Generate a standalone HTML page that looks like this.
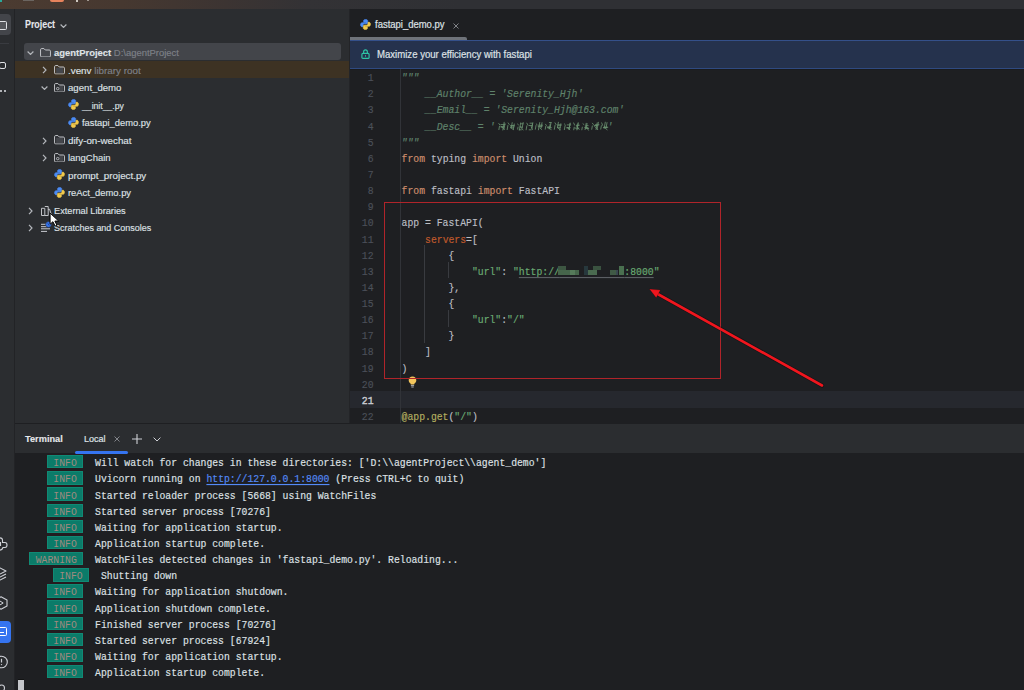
<!DOCTYPE html>
<html><head><meta charset="utf-8">
<style>
*{margin:0;padding:0;box-sizing:border-box}
html,body{width:1024px;height:690px;overflow:hidden;background:#1e1f22}
body{position:relative;font-family:"Liberation Sans",sans-serif;color:#dfe1e5}
.abs{position:absolute}
#title{left:0;top:0;width:1024px;height:9px;background:linear-gradient(90deg,#4b3b31 0%,#463830 12%,#3c3432 22%,#333235 30%,#2f3034 45%,#2f3034 100%)}
#lstrip{left:0;top:9px;width:15px;height:681px;background:#2b2d30;border-right:1px solid #222326}
#proj{left:15px;top:9px;width:335px;height:414px;background:#2b2d30}
#editor{left:350px;top:9px;width:674px;height:414px;background:#1e1f22}
#termhdr{left:15px;top:423px;width:1009px;height:30px;background:#2b2d30;border-top:1px solid #1e1f22}
#term{left:15px;top:453px;width:1009px;height:237px;background:#1e1f22}
.ui{font-family:"Liberation Sans",sans-serif;font-size:9.5px;white-space:pre;line-height:12px}
.mono{position:absolute;font-family:"Liberation Mono",monospace;font-size:9.77px;white-space:pre;line-height:16.14px;transform:scaleY(1.13);transform-origin:0 12.2px;-webkit-text-stroke:0.15px}
.row{position:absolute;height:17.5px;line-height:17.5px;font-size:9.6px;white-space:pre;-webkit-text-stroke:0.15px}
.gray{color:#7e8188}
</style></head><body>
<div id="title" class="abs"></div>
<div id="lstrip" class="abs"></div>
<div id="proj" class="abs"></div>
<div id="editor" class="abs"></div>
<div id="termhdr" class="abs"></div>
<div id="term" class="abs"></div>
<svg width="0" height="0" style="position:absolute">
<defs>
<symbol id="py" viewBox="0 0 16 16">
<path fill="#4c8cf5" stroke="#4c8cf5" stroke-width="0.9" stroke-linejoin="round" d="M7.9 0.8C5.2 0.8 5.3 2 5.3 2.6V4.6H8.1V5.3H3.3C1.8 5.3 0.8 6.3 0.8 8.3C0.8 10.3 1.7 11.2 3 11.2H4.4V9.3C4.4 8 5.4 7 6.6 7H9.6C10.6 7 11.2 6.3 11.2 5.3V2.7C11.2 1.6 10.2 0.8 7.9 0.8Z"/>
<path fill="#f2c94c" stroke="#f2c94c" stroke-width="0.9" stroke-linejoin="round" d="M8.1 15.2C10.8 15.2 10.7 14 10.7 13.4V11.4H7.9V10.7H12.7C14.2 10.7 15.2 9.7 15.2 7.7C15.2 5.7 14.3 4.8 13 4.8H11.6V6.7C11.6 8 10.6 9 9.4 9H6.4C5.4 9 4.8 9.7 4.8 10.7V13.3C4.8 14.4 5.8 15.2 8.1 15.2Z"/>
</symbol>
<symbol id="folder" viewBox="0 0 11 9.5">
<path fill="#44464b" d="M2.1 2.7H9V8H2.1Z"/>
<path fill="none" stroke="#c9cbd0" stroke-width="0.95" d="M0.55 1.7C0.55 1 1 0.55 1.7 0.55H3.9L5.3 2H9.3C10 2 10.45 2.45 10.45 3.1V7.9C10.45 8.55 10 9 9.3 9H1.7C1 9 0.55 8.55 0.55 7.9Z"/>
</symbol>
<symbol id="modfolder" viewBox="0 0 11 9.5">
<path fill="#44464b" d="M5.2 2.7H9V8H5.2Z"/>
<path fill="none" stroke="#c9cbd0" stroke-width="0.95" d="M0.55 1.7C0.55 1 1 0.55 1.7 0.55H3.9L5.3 2H9.3C10 2 10.45 2.45 10.45 3.1V7.9C10.45 8.55 10 9 9.3 9H1.7C1 9 0.55 8.55 0.55 7.9Z"/>
<circle cx="3.7" cy="5.6" r="1.25" fill="none" stroke="#c9cbd0" stroke-width="0.8"/>
</symbol>
<symbol id="chr" viewBox="0 0 5 8"><path fill="none" stroke="#b4b7bc" stroke-width="1.2" d="M1 0.8L4 4L1 7.2"/></symbol>
<symbol id="chd" viewBox="0 0 7 4"><path fill="none" stroke="#b4b7bc" stroke-width="1.2" d="M0.6 0.5L3.5 3.4L6.4 0.5"/></symbol>
</defs></svg>
<div class="abs" style="left:0;top:0;width:2px;height:2px;background:#2aa89a"></div>
<div class="abs" style="left:23px;top:0;width:11px;height:1.2px;background:#6b6560"></div>
<div class="abs" style="left:50px;top:0;width:14px;height:2.2px;background:#e8835c;border-radius:0 0 2px 2px"></div>
<div class="abs" style="left:76px;top:0;width:1.5px;height:1.5px;background:#cfc8c0"></div>
<div class="abs" style="left:87px;top:0;width:2px;height:1.2px;background:#a09890"></div>
<div class="abs" style="left:0;top:13.8px;width:11px;height:21.7px;background:#43454a;border-radius:0 4px 4px 0"></div>
<div class="abs" style="left:-2px;top:21px;width:8.5px;height:9.4px;border:1.1px solid #dfe1e5;border-radius:1.5px;background:#55575c"></div>
<div class="abs" style="left:0;top:43px;width:9px;height:1px;background:#393b40"></div>
<div class="abs" style="left:-1px;top:61.8px;width:7px;height:6.8px;border:1.3px solid #dfe1e5;border-radius:2px"></div>
<div class="abs" style="left:-0.5px;top:90.3px;width:2px;height:2px;background:#dfe1e5;border-radius:1px"></div>
<div class="abs" style="left:4px;top:90.3px;width:2px;height:2px;background:#dfe1e5;border-radius:1px"></div>
<svg class="abs" style="left:-2.5px;top:537px" width="10" height="14" viewBox="0 0 10 14"><path d="M-3 3C-3 1.5 -1.5 0.8 1 0.8C3.5 0.8 4.5 1.8 4.5 3V5.5H7C8.5 5.5 9 6.5 9 8C9 9.5 8.5 10.5 7 10.5H5C4.5 12.5 3 13.2 1 13.2C-1.5 13.2 -3 12.5 -3 11" fill="none" stroke="#ced0d6" stroke-width="1.1"/><path d="M-3 5.5H2.5V8.5H-3" fill="none" stroke="#ced0d6" stroke-width="1.1"/></svg>
<svg class="abs" style="left:-2px;top:566.5px" width="10" height="14" viewBox="0 0 10 14"><path d="M-4 4L2 1L8 4L2 7Z M-4 7L2 10L8 7 M-4 10L2 13L8 10" fill="none" stroke="#ced0d6" stroke-width="1.1" stroke-linejoin="round"/></svg>
<svg class="abs" style="left:-1.5px;top:596px" width="10" height="14" viewBox="0 0 10 14"><path d="M2 0.8L8 4V10L2 13.2L-4 10V4Z" fill="none" stroke="#ced0d6" stroke-width="1.1" stroke-linejoin="round"/><path d="M0 4.5L4.2 7L0 9.5Z" fill="none" stroke="#ced0d6" stroke-width="1"/></svg>
<div class="abs" style="left:0;top:621px;width:11px;height:22px;background:#3574f0;border-radius:0 4px 4px 0"></div>
<div class="abs" style="left:-2px;top:627px;width:8.5px;height:9px;border:1.1px solid #ffffff;border-radius:1.5px"></div>
<div class="abs" style="left:0;top:632px;width:4px;height:1px;background:#fff"></div>
<svg class="abs" style="left:0;top:654.5px" width="10" height="14" viewBox="0 0 10 14"><circle cx="1.5" cy="7" r="5.8" fill="none" stroke="#ced0d6" stroke-width="1.1"/><path d="M1.5 3.8V7.5" stroke="#ced0d6" stroke-width="1.2"/><circle cx="1.5" cy="9.6" r="0.7" fill="#ced0d6"/></svg>
<svg class="abs" style="left:0;top:683px" width="10" height="7" viewBox="0 0 10 7"><circle cx="1.5" cy="5" r="3" fill="none" stroke="#ced0d6" stroke-width="1.1"/></svg>
<div class="abs ui" style="left:24.8px;top:19.27px;font-size:10.2px;font-weight:bold;color:#e6e8ec;transform:scaleX(0.87);transform-origin:0 0;-webkit-text-stroke:0.1px">Project</div>
<svg class="abs" style="left:60px;top:23.5px" width="7" height="4"><use href="#chd"/></svg>
<div class="abs" style="left:24px;top:43.3px;width:317px;height:17px;background:#43454a;border-radius:3px"></div>
<div class="abs" style="left:15px;top:60.5px;width:334px;height:17.4px;background:#3d3223"></div>
<svg class="abs" style="left:27px;top:50.90px" width="7" height="4"><use href="#chd"/></svg>
<svg class="abs" style="left:40px;top:47.70px" width="11" height="9.5"><use href="#folder"/></svg>
<div class="row" style="left:53.7px;top:44.15px;font-weight:bold;transform:scaleX(0.984);transform-origin:0 0">agentProject<span class="gray" style="font-weight:normal"> D:\agentProject</span></div>
<svg class="abs" style="left:42px;top:66.43px" width="5" height="8"><use href="#chr"/></svg>
<svg class="abs" style="left:54px;top:65.23px" width="11" height="9.5"><use href="#folder"/></svg>
<div class="row" style="left:67.7px;top:61.68px;transform:scaleX(1.025);transform-origin:0 0">.venv<span class="gray" style="font-weight:normal"> library root</span></div>
<svg class="abs" style="left:41px;top:85.96px" width="7" height="4"><use href="#chd"/></svg>
<svg class="abs" style="left:54px;top:82.76px" width="11" height="9.5"><use href="#modfolder"/></svg>
<div class="row" style="left:67.7px;top:79.21px;transform:scaleX(1.002);transform-origin:0 0">agent_demo</div>
<svg class="abs" style="left:68px;top:99.09px" width="11" height="11"><use href="#py"/></svg>
<div class="row" style="left:81.7px;top:96.74px;transform:scaleX(0.902);transform-origin:0 0">__init__.py</div>
<svg class="abs" style="left:68px;top:116.62px" width="11" height="11"><use href="#py"/></svg>
<div class="row" style="left:81.7px;top:114.27px;transform:scaleX(0.975);transform-origin:0 0">fastapi_demo.py</div>
<svg class="abs" style="left:42px;top:136.55px" width="5" height="8"><use href="#chr"/></svg>
<svg class="abs" style="left:54px;top:135.35px" width="11" height="9.5"><use href="#folder"/></svg>
<div class="row" style="left:67.7px;top:131.80px;transform:scaleX(1.017);transform-origin:0 0">dify-on-wechat</div>
<svg class="abs" style="left:42px;top:154.08px" width="5" height="8"><use href="#chr"/></svg>
<svg class="abs" style="left:54px;top:152.88px" width="11" height="9.5"><use href="#modfolder"/></svg>
<div class="row" style="left:67.7px;top:149.33px;transform:scaleX(0.984);transform-origin:0 0">langChain</div>
<svg class="abs" style="left:54px;top:169.21px" width="11" height="11"><use href="#py"/></svg>
<div class="row" style="left:67.7px;top:166.86px;transform:scaleX(1.019);transform-origin:0 0">prompt_project.py</div>
<svg class="abs" style="left:54px;top:186.74px" width="11" height="11"><use href="#py"/></svg>
<div class="row" style="left:67.7px;top:184.39px;transform:scaleX(0.977);transform-origin:0 0">reAct_demo.py</div>
<svg class="abs" style="left:28px;top:206.67px" width="5" height="8"><use href="#chr"/></svg>
<svg class="abs" style="left:41px;top:205.5px" width="11" height="10" viewBox="0 0 11 10"><path fill="none" stroke="#c9cbd0" stroke-width="0.95" d="M0.5 2.3H3.8V9.5H0.5Z M3.8 0.5H7.2V9.5H3.8 M7.2 3.5L8.6 3.2L10.5 9.2L9.2 9.5"/></svg>
<div class="row" style="left:53.7px;top:201.92px;transform:scaleX(0.96);transform-origin:0 0">External Libraries</div>
<svg class="abs" style="left:28px;top:224.20px" width="5" height="8"><use href="#chr"/></svg>
<svg class="abs" style="left:41px;top:221px" width="13" height="12" viewBox="0 0 13 12"><path fill="none" stroke="#c9cbd0" stroke-width="1" d="M0 3.3H5M0 5.7H6M0 7.8H9M0 10.4H6"/><circle cx="7.5" cy="3.5" r="2.9" fill="#3574f0" stroke="#2b2d30" stroke-width="0.6"/><path d="M6.8 2.3L8.2 4.5" stroke="#1e3f80" stroke-width="0.8" fill="none"/></svg>
<div class="row" style="left:53.7px;top:219.45px;transform:scaleX(0.935);transform-origin:0 0">Scratches and Consoles</div>
<svg class="abs" style="left:49.2px;top:211.6px" width="12" height="15.3" viewBox="0 0 11 14"><path d="M1 1V11.2L3.6 8.9L5.6 12.9L7.3 12.1L5.4 8.3H8.9Z" fill="#ffffff" stroke="#000" stroke-width="0.9" stroke-linejoin="round"/></svg>

<svg class="abs" style="left:360px;top:19.3px" width="11" height="11"><use href="#py"/></svg>
<div class="abs ui" style="left:375.0px;top:18.77px;font-size:10.2px;color:#dfe1e5;transform:scaleX(0.93);transform-origin:0 0;-webkit-text-stroke:0.2px">fastapi_demo.py</div>
<svg class="abs" style="left:453px;top:22.5px" width="6" height="6" viewBox="0 0 6 6"><path d="M0.5 0.5L5.5 5.5M5.5 0.5L0.5 5.5" stroke="#8c8f94" stroke-width="0.9"/></svg>
<div class="abs" style="left:350px;top:37px;width:117px;height:3px;background:#6f737a;border-radius:0 2px 0 0"></div>
<div class="abs" style="left:350px;top:40px;width:674px;height:28.5px;background:#25324d;border-top:1.2px solid #34508a;border-bottom:1.5px solid #2f4a80"></div>
<div class="abs" style="left:350px;top:68.5px;width:674px;height:1px;background:#1a1b1e"></div>
<div class="abs" style="left:349px;top:9px;width:1.2px;height:414px;background:#232427"></div>
<svg class="abs" style="left:360.8px;top:49.3px" width="9" height="10" viewBox="0 0 9 10"><path d="M2.6 4.4V3C2.6 1.7 3.4 0.8 4.5 0.8C5.6 0.8 6.4 1.7 6.4 3V4.4" fill="none" stroke="#2ec4a5" stroke-width="1.15"/><rect x="0.9" y="4.4" width="7.2" height="5" rx="1" fill="none" stroke="#2ec4a5" stroke-width="1.15"/><rect x="4" y="6.2" width="1" height="1.4" fill="#2ec4a5"/></svg>
<div class="abs ui" style="left:377.0px;top:48.57px;font-size:10.2px;color:#dfe1e5;transform:scaleX(0.941);transform-origin:0 0;-webkit-text-stroke:0.2px">Maximize your efficiency with fastapi</div>
<div class="abs" style="left:350px;top:391.40px;width:674px;height:16.4px;background:#26282e"></div>
<div class="abs" style="left:400px;top:69px;width:1px;height:354px;background:#313338"></div>
<div class="abs" style="left:424px;top:245.4px;width:1px;height:97.5px;background:#393b40"></div>
<div class="abs" style="left:448px;top:261.7px;width:1px;height:16.2px;background:#393b40"></div>
<div class="abs" style="left:448px;top:310.4px;width:1px;height:16.2px;background:#393b40"></div>
<div class="mono" style="left:350px;top:71.10px;width:23.6px;text-align:right;color:#4b5059">1</div>
<div class="mono" style="left:401.6px;top:71.10px"><span style="color:#5f826b;font-style:italic">"""</span></div>
<div class="mono" style="left:350px;top:87.24px;width:23.6px;text-align:right;color:#4b5059">2</div>
<div class="mono" style="left:401.6px;top:87.24px"><span style="color:#5f826b;font-style:italic">    __Author__ = 'Serenity_Hjh'</span></div>
<div class="mono" style="left:350px;top:103.38px;width:23.6px;text-align:right;color:#4b5059">3</div>
<div class="mono" style="left:401.6px;top:103.38px"><span style="color:#5f826b;font-style:italic">    __Email__ = 'Serenity_Hjh@163.com'</span></div>
<div class="mono" style="left:350px;top:119.52px;width:23.6px;text-align:right;color:#4b5059">4</div>
<div class="mono" style="left:401.6px;top:119.52px"><span style="color:#5f826b;font-style:italic">    __Desc__ = '</span><span class="cjk" style="display:inline-block;width:112px;height:10px"></span><span style="color:#5f826b;font-style:italic">'</span></div>
<div class="mono" style="left:350px;top:135.66px;width:23.6px;text-align:right;color:#4b5059">5</div>
<div class="mono" style="left:401.6px;top:135.66px"><span style="color:#5f826b;font-style:italic">"""</span></div>
<div class="mono" style="left:350px;top:151.80px;width:23.6px;text-align:right;color:#4b5059">6</div>
<div class="mono" style="left:401.6px;top:151.80px"><span style="color:#cf8e6d;">from</span><span style="color:#bcbec4;"> typing </span><span style="color:#cf8e6d;">import</span><span style="color:#bcbec4;"> Union</span></div>
<div class="mono" style="left:350px;top:167.94px;width:23.6px;text-align:right;color:#4b5059">7</div>
<div class="mono" style="left:350px;top:184.08px;width:23.6px;text-align:right;color:#4b5059">8</div>
<div class="mono" style="left:401.6px;top:184.08px"><span style="color:#cf8e6d;">from</span><span style="color:#bcbec4;"> fastapi </span><span style="color:#cf8e6d;">import</span><span style="color:#bcbec4;"> FastAPI</span></div>
<div class="mono" style="left:350px;top:200.22px;width:23.6px;text-align:right;color:#4b5059">9</div>
<div class="mono" style="left:350px;top:216.36px;width:23.6px;text-align:right;color:#4b5059">10</div>
<div class="mono" style="left:401.6px;top:216.36px"><span style="color:#bcbec4;">app = FastAPI(</span></div>
<div class="mono" style="left:350px;top:232.50px;width:23.6px;text-align:right;color:#4b5059">11</div>
<div class="mono" style="left:401.6px;top:232.50px"><span style="color:#bcbec4;">    </span><span style="color:#c05a2c;">servers</span><span style="color:#bcbec4;">=[</span></div>
<div class="mono" style="left:350px;top:248.64px;width:23.6px;text-align:right;color:#4b5059">12</div>
<div class="mono" style="left:401.6px;top:248.64px"><span style="color:#bcbec4;">        {</span></div>
<div class="mono" style="left:350px;top:264.78px;width:23.6px;text-align:right;color:#4b5059">13</div>
<div class="mono" style="left:401.6px;top:264.78px"><span style="color:#bcbec4;">            </span><span style="color:#6aab73;">"url"</span><span style="color:#bcbec4;">: </span><span style="color:#6aab73;">"</span><span style="color:#6aab73;text-decoration:underline;text-decoration-color:#5b5e63;text-underline-offset:2px">http://<span class="blur">           </span>:8000</span><span style="color:#6aab73;">"</span></div>
<div class="mono" style="left:350px;top:280.92px;width:23.6px;text-align:right;color:#4b5059">14</div>
<div class="mono" style="left:401.6px;top:280.92px"><span style="color:#bcbec4;">        },</span></div>
<div class="mono" style="left:350px;top:297.06px;width:23.6px;text-align:right;color:#4b5059">15</div>
<div class="mono" style="left:401.6px;top:297.06px"><span style="color:#bcbec4;">        {</span></div>
<div class="mono" style="left:350px;top:313.20px;width:23.6px;text-align:right;color:#4b5059">16</div>
<div class="mono" style="left:401.6px;top:313.20px"><span style="color:#bcbec4;">            </span><span style="color:#6aab73;">"url"</span><span style="color:#bcbec4;">:</span><span style="color:#6aab73;">"/"</span></div>
<div class="mono" style="left:350px;top:329.34px;width:23.6px;text-align:right;color:#4b5059">17</div>
<div class="mono" style="left:401.6px;top:329.34px"><span style="color:#bcbec4;">        }</span></div>
<div class="mono" style="left:350px;top:345.48px;width:23.6px;text-align:right;color:#4b5059">18</div>
<div class="mono" style="left:401.6px;top:345.48px"><span style="color:#bcbec4;">    ]</span></div>
<div class="mono" style="left:350px;top:361.62px;width:23.6px;text-align:right;color:#4b5059">19</div>
<div class="mono" style="left:401.6px;top:361.62px"><span style="color:#bcbec4;">)</span></div>
<div class="mono" style="left:350px;top:377.76px;width:23.6px;text-align:right;color:#4b5059">20</div>
<div class="mono" style="left:350px;top:393.90px;width:23.6px;text-align:right;color:#c9ccd2;-webkit-text-stroke:0.35px">21</div>
<div class="mono" style="left:350px;top:410.04px;width:23.6px;text-align:right;color:#4b5059">22</div>
<div class="mono" style="left:401.6px;top:410.04px"><span style="color:#b3ae60;">@app.get</span><span style="color:#bcbec4;">(</span><span style="color:#6aab73;">"/"</span><span style="color:#bcbec4;">)</span></div>
<svg class="abs" style="left:496px;top:120.5px" width="115" height="11" viewBox="0 0 115 11"><g stroke="#6a9070" stroke-width="0.8" fill="none" transform="skewX(-10) translate(2,0)"><path d="M1.0 2.2L2.8 4.3 M2.4 4.9V9.0 M3.3 5.8H7.5 M4.2 6.1H6.7 M3.1 3.6H8.1 M6.4 0.9V9.4 M7.4 2.2V8.3 M4.3 5.0L8.2 9.0"/><path d="M10.3 1.6L12.1 3.8 M10.7 4.1V9.0 M13.6 4.6H16.9 M13.1 6.2H17.2 M12.8 4.8H17.8 M16.8 2.6V8.6 M14.5 1.3V7.4 M13.5 6.5L17.5 8.9"/><path d="M19.7 2.8L21.5 4.1 M21.1 5.7V8.5 M23.1 2.8H26.1 M22.3 8.8H25.3 M22.9 6.1H25.7 M23.0 1.5V9.4 M25.4 1.1V7.2 M22.9 5.1L26.9 9.3"/><path d="M29.0 1.8L30.8 4.3 M29.7 4.4V9.2 M32.0 2.2H34.8 M31.4 4.5H35.1 M32.3 8.8H35.2 M35.1 1.3V7.7 M35.0 2.2V6.8 M34.0 5.4L36.2 8.8"/><path d="M38.4 2.7L40.2 4.0 M38.8 4.1V8.6 M40.8 5.7H45.1 M41.1 4.1H45.8 M41.3 5.0H45.6 M42.0 1.1V9.2 M44.3 1.3V7.1 M42.9 6.9L45.6 8.7"/><path d="M47.8 2.9L49.5 4.8 M48.7 4.8V8.6 M51.2 1.5H53.7 M50.1 6.7H54.9 M50.2 5.9H53.6 M53.3 1.0V7.2 M52.7 2.7V8.3 M51.3 6.8L55.0 8.7"/><path d="M57.1 1.5L58.9 3.9 M57.8 4.1V8.7 M60.0 4.1H62.9 M60.4 4.0H64.6 M60.1 6.3H63.8 M60.6 0.9V6.6 M63.3 2.3V9.4 M60.1 6.3L64.3 9.0"/><path d="M66.5 2.6L68.2 4.0 M67.9 4.2V9.0 M69.8 6.9H73.4 M69.6 6.7H73.8 M69.5 3.9H73.8 M72.5 1.7V8.9 M72.5 2.1V8.4 M70.2 6.2L73.7 9.1"/><path d="M75.8 1.6L77.6 4.5 M77.3 5.8V9.2 M78.9 4.2H82.5 M79.1 4.6H81.5 M77.8 7.1H82.5 M80.5 1.3V8.6 M80.5 2.2V9.3 M79.3 5.0L83.0 8.8"/><path d="M85.1 2.5L86.9 3.8 M85.4 5.8V9.2 M88.5 4.6H91.3 M87.4 6.4H91.5 M88.5 7.5H92.4 M89.5 2.1V7.4 M88.6 1.9V9.0 M89.8 6.4L92.3 9.5"/><path d="M94.5 1.9L96.3 3.8 M95.2 4.6V8.7 M97.4 4.4H101.0 M97.8 3.7H102.0 M96.6 4.7H100.1 M100.6 0.9V8.6 M99.5 1.5V8.9 M97.5 5.3L101.7 9.0"/><path d="M103.8 1.5L105.6 4.7 M104.2 4.3V8.5 M106.5 6.1H110.6 M107.1 6.3H111.3 M106.1 6.5H110.3 M107.5 0.8V7.9 M109.3 1.2V7.3 M107.5 6.4L111.0 9.0"/></g></svg>
<div class="abs" style="left:557.8px;top:266.1px;width:8.2px;height:4.1px;background:#3d5642"></div>
<div class="abs" style="left:557.8px;top:270.2px;width:21.7px;height:4.5px;background:#46654b"></div>
<div class="abs" style="left:570px;top:270.2px;width:5.0px;height:4.5px;background:#557a5a"></div>
<div class="abs" style="left:584px;top:266px;width:4.1px;height:9.0px;background:#27383d"></div>
<div class="abs" style="left:588.1px;top:270px;width:8.7px;height:5.0px;background:#4a6a50"></div>
<div class="abs" style="left:592.6px;top:266px;width:8.7px;height:4.0px;background:#3a5240"></div>
<div class="abs" style="left:609.9px;top:270px;width:5.7px;height:5.0px;background:#405a46"></div>
<div class="abs" style="left:615.6px;top:270px;width:2.9px;height:5.0px;background:#3a4750"></div>
<div class="abs" style="left:618.5px;top:266px;width:5.7px;height:9.0px;background:#4a7050"></div>
<svg class="abs" style="left:408px;top:375.5px" width="9" height="12" viewBox="0 0 9 12"><path d="M4.5 0.5C2.3 0.5 0.7 2.1 0.7 4.2C0.7 5.6 1.4 6.5 2.2 7.3C2.6 7.7 2.8 8.1 2.8 8.6H6.2C6.2 8.1 6.4 7.7 6.8 7.3C7.6 6.5 8.3 5.6 8.3 4.2C8.3 2.1 6.7 0.5 4.5 0.5Z" fill="#f2c55c"/><rect x="2.9" y="9" width="3.2" height="1.2" fill="#9a9ca1"/><rect x="3.3" y="10.5" width="2.4" height="1.1" fill="#9a9ca1"/></svg>
<div class="abs" style="left:384px;top:201.6px;width:337px;height:177.4px;border:1.3px solid #b0242a"></div>
<svg class="abs" style="left:0;top:0" width="1024" height="690" viewBox="0 0 1024 690"><line x1="822" y1="385.5" x2="655" y2="292.5" stroke="#000" stroke-opacity="0.35" stroke-width="4.2" stroke-linecap="round"/><line x1="822" y1="385.5" x2="655" y2="292.5" stroke="#f0161e" stroke-width="2.6" stroke-linecap="round"/><path d="M649.4 289.1L660.4 290.1L656.2 297.8Z" fill="#f0161e" stroke="#000" stroke-opacity="0.3" stroke-width="0.6"/></svg>
<div class="abs ui" style="left:24.5px;top:432.74px;font-size:9.4px;font-weight:bold;color:#e6e8ec;transform:scaleX(0.985);transform-origin:0 0;-webkit-text-stroke:0.1px">Terminal</div>
<div class="abs ui" style="left:83.5px;top:432.74px;font-size:9.4px;color:#dfe1e5;transform:scaleX(0.96);transform-origin:0 0;-webkit-text-stroke:0.2px">Local</div>
<svg class="abs" style="left:114px;top:436.3px" width="6" height="6" viewBox="0 0 6 6"><path d="M0.5 0.5L5.5 5.5M5.5 0.5L0.5 5.5" stroke="#8c8f94" stroke-width="0.9"/></svg>
<svg class="abs" style="left:132px;top:433.5px" width="10" height="10" viewBox="0 0 10 10"><path d="M5 0V10M0 5H10" stroke="#ced0d6" stroke-width="1.1"/></svg>
<svg class="abs" style="left:152.5px;top:436.5px" width="8" height="5" viewBox="0 0 8 5"><path d="M0.6 0.6L4 4L7.4 0.6" stroke="#ced0d6" stroke-width="1" fill="none"/></svg>
<div class="abs" style="left:75.2px;top:451.3px;width:52.6px;height:2.7px;background:#3574f0;border-radius:1.5px"></div>
<div class="abs" style="left:46.88px;top:455.10px;width:35.96px;height:13.4px;background:#0b7b69;border:1px solid #108a75;box-shadow:0 0 0 0.7px #2a1a1e"></div>
<div class="mono" style="left:53.34px;top:456.20px;color:#a08a80;-webkit-text-stroke:0">INFO</div>
<div class="mono" style="left:95.06px;top:456.20px;color:#dfe1e5">Will watch for changes in these directories: ['D:\\agentProject\\agent_demo']</div>
<div class="abs" style="left:46.88px;top:471.25px;width:35.96px;height:13.4px;background:#0b7b69;border:1px solid #108a75;box-shadow:0 0 0 0.7px #2a1a1e"></div>
<div class="mono" style="left:53.34px;top:472.35px;color:#a08a80;-webkit-text-stroke:0">INFO</div>
<div class="mono" style="left:95.06px;top:472.35px;color:#dfe1e5">Uvicorn running on <span style="color:#548af7;text-decoration:underline;text-underline-offset:1.5px">http://127.0.0.1:8000</span> (Press CTRL+C to quit)</div>
<div class="abs" style="left:46.88px;top:487.40px;width:35.96px;height:13.4px;background:#0b7b69;border:1px solid #108a75;box-shadow:0 0 0 0.7px #2a1a1e"></div>
<div class="mono" style="left:53.34px;top:488.50px;color:#a08a80;-webkit-text-stroke:0">INFO</div>
<div class="mono" style="left:95.06px;top:488.50px;color:#dfe1e5">Started reloader process [5668] using WatchFiles</div>
<div class="abs" style="left:46.88px;top:503.55px;width:35.96px;height:13.4px;background:#0b7b69;border:1px solid #108a75;box-shadow:0 0 0 0.7px #2a1a1e"></div>
<div class="mono" style="left:53.34px;top:504.65px;color:#a08a80;-webkit-text-stroke:0">INFO</div>
<div class="mono" style="left:95.06px;top:504.65px;color:#dfe1e5">Started server process [70276]</div>
<div class="abs" style="left:46.88px;top:519.70px;width:35.96px;height:13.4px;background:#0b7b69;border:1px solid #108a75;box-shadow:0 0 0 0.7px #2a1a1e"></div>
<div class="mono" style="left:53.34px;top:520.80px;color:#a08a80;-webkit-text-stroke:0">INFO</div>
<div class="mono" style="left:95.06px;top:520.80px;color:#dfe1e5">Waiting for application startup.</div>
<div class="abs" style="left:46.88px;top:535.85px;width:35.96px;height:13.4px;background:#0b7b69;border:1px solid #108a75;box-shadow:0 0 0 0.7px #2a1a1e"></div>
<div class="mono" style="left:53.34px;top:536.95px;color:#a08a80;-webkit-text-stroke:0">INFO</div>
<div class="mono" style="left:95.06px;top:536.95px;color:#dfe1e5">Application startup complete.</div>
<div class="abs" style="left:29.30px;top:552.00px;width:53.54px;height:13.4px;background:#0b7b69;border:1px solid #108a75;box-shadow:0 0 0 0.7px #2a1a1e"></div>
<div class="mono" style="left:35.76px;top:553.10px;color:#a08a80;-webkit-text-stroke:0">WARNING</div>
<div class="mono" style="left:95.06px;top:553.10px;color:#dfe1e5">WatchFiles detected changes in 'fastapi_demo.py'. Reloading...</div>
<div class="abs" style="left:52.74px;top:568.15px;width:35.96px;height:13.4px;background:#0b7b69;border:1px solid #108a75;box-shadow:0 0 0 0.7px #2a1a1e"></div>
<div class="mono" style="left:59.20px;top:569.25px;color:#a08a80;-webkit-text-stroke:0">INFO</div>
<div class="mono" style="left:100.92px;top:569.25px;color:#dfe1e5">Shutting down</div>
<div class="abs" style="left:46.88px;top:584.30px;width:35.96px;height:13.4px;background:#0b7b69;border:1px solid #108a75;box-shadow:0 0 0 0.7px #2a1a1e"></div>
<div class="mono" style="left:53.34px;top:585.40px;color:#a08a80;-webkit-text-stroke:0">INFO</div>
<div class="mono" style="left:95.06px;top:585.40px;color:#dfe1e5">Waiting for application shutdown.</div>
<div class="abs" style="left:46.88px;top:600.45px;width:35.96px;height:13.4px;background:#0b7b69;border:1px solid #108a75;box-shadow:0 0 0 0.7px #2a1a1e"></div>
<div class="mono" style="left:53.34px;top:601.55px;color:#a08a80;-webkit-text-stroke:0">INFO</div>
<div class="mono" style="left:95.06px;top:601.55px;color:#dfe1e5">Application shutdown complete.</div>
<div class="abs" style="left:46.88px;top:616.60px;width:35.96px;height:13.4px;background:#0b7b69;border:1px solid #108a75;box-shadow:0 0 0 0.7px #2a1a1e"></div>
<div class="mono" style="left:53.34px;top:617.70px;color:#a08a80;-webkit-text-stroke:0">INFO</div>
<div class="mono" style="left:95.06px;top:617.70px;color:#dfe1e5">Finished server process [70276]</div>
<div class="abs" style="left:46.88px;top:632.75px;width:35.96px;height:13.4px;background:#0b7b69;border:1px solid #108a75;box-shadow:0 0 0 0.7px #2a1a1e"></div>
<div class="mono" style="left:53.34px;top:633.85px;color:#a08a80;-webkit-text-stroke:0">INFO</div>
<div class="mono" style="left:95.06px;top:633.85px;color:#dfe1e5">Started server process [67924]</div>
<div class="abs" style="left:46.88px;top:648.90px;width:35.96px;height:13.4px;background:#0b7b69;border:1px solid #108a75;box-shadow:0 0 0 0.7px #2a1a1e"></div>
<div class="mono" style="left:53.34px;top:650.00px;color:#a08a80;-webkit-text-stroke:0">INFO</div>
<div class="mono" style="left:95.06px;top:650.00px;color:#dfe1e5">Waiting for application startup.</div>
<div class="abs" style="left:46.88px;top:665.05px;width:35.96px;height:13.4px;background:#0b7b69;border:1px solid #108a75;box-shadow:0 0 0 0.7px #2a1a1e"></div>
<div class="mono" style="left:53.34px;top:666.15px;color:#a08a80;-webkit-text-stroke:0">INFO</div>
<div class="mono" style="left:95.06px;top:666.15px;color:#dfe1e5">Application startup complete.</div>
<div class="abs" style="left:17.8px;top:679.8px;width:6px;height:10.2px;background:#c4c6ca;box-shadow:0 -0.8px 0 #111"></div>
</body></html>
